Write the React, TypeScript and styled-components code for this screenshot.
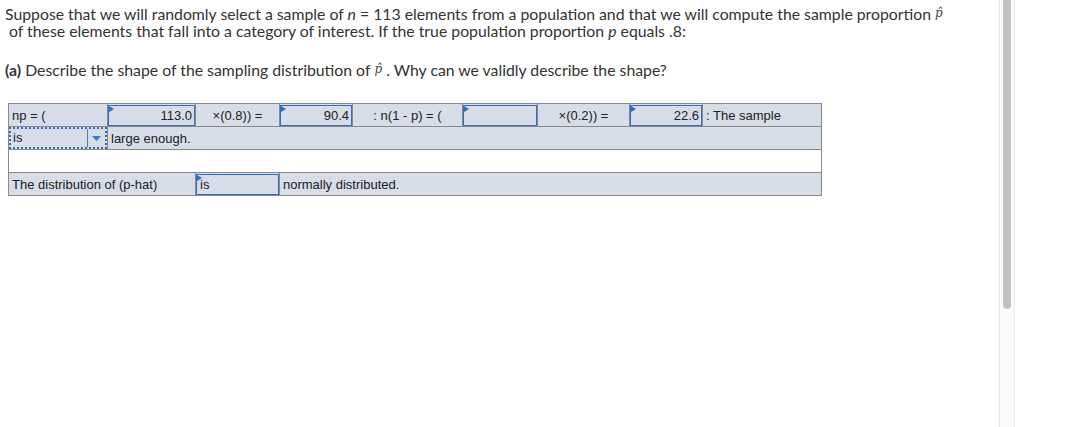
import React from "react";
import styled, { createGlobalStyle } from "styled-components";

const Global = createGlobalStyle`
  html, body { margin: 0; padding: 0; background: #ffffff; }
  body { overflow: hidden; }
`;

const Page = styled.div`
  display: flex;
  width: 1071px;
  height: 427px;
  overflow: hidden;
`;

const Main = styled.div`
  width: 999px;
  height: 427px;
  overflow: hidden;
  flex: none;
`;

const ScrollTrack = styled.div`
  height: 427px;
  flex: none;
  background: #fafafa;
  border-left: 1px solid #e6e6e6;
  border-right: 1px solid #ececec;
  padding: 0 3px;
  box-sizing: content-box;
  width: 8px;
  display: flex;
  flex-direction: column;
`;

const ScrollThumb = styled.div`
  height: 309px;
  background: #c1c1c1;
  border-radius: 0 0 4px 4px;
`;

const Content = styled.div`
  box-sizing: border-box;
  padding: 5px 0 0 5px;
  font-family: Lato, "Open Sans", sans-serif;
  font-size: 15.8px;
  color: #333333;
`;

const Para = styled.p`
  margin: 0;
  line-height: 17px;
`;

const Question = styled.p`
  margin: 22px 0 0 0;
  line-height: 17px;
`;

const Ital = styled.i`
  font-style: italic;
`;

const Hat = styled.span`
  display: inline-block;
  font-family: "DejaVu Serif", serif;
  font-style: italic;
  font-size: 12px;
  line-height: 12px;
  color: #444;
  vertical-align: 3px;
  margin: 0 4px;
`;

const Table = styled.table`
  margin: 25px 0 0 3px;
  border-collapse: collapse;
  table-layout: fixed;
  width: 813px;
  font-family: "Liberation Sans", Arial, sans-serif;
  font-size: 13px;
  color: #222;
`;

const Row = styled.tr<{ $blank?: boolean }>`
  height: 23px;
  background: ${(p) => (p.$blank ? "#ffffff" : "#d6dce8")};
`;

const Cell = styled.td<{ $align?: string }>`
  border: 1px solid #8a8a8a;
  padding: 0 3px;
  text-align: ${(p) => p.$align || "left"};
  white-space: nowrap;
  overflow: hidden;
  vertical-align: middle;
`;

const InputCell = styled.td`
  border: 1px solid #8a8a8a;
  padding: 0;
  vertical-align: middle;
`;

const InputBox = styled.div<{ $align?: string }>`
  position: relative;
  height: 21px;
  box-sizing: border-box;
  border: 1px solid #2f6fbd;
  line-height: 19px;
  padding: 0 2px 0 3px;
  text-align: ${(p) => p.$align || "right"};
  &::before {
    content: "";
    position: absolute;
    left: 0;
    top: 0;
    width: 0;
    height: 0;
    border-top: 3px solid transparent;
    border-bottom: 3px solid transparent;
    border-left: 5px solid #2f6fbd;
  }
`;

const SelectCell = styled.td`
  border: 1px solid #8a8a8a;
  padding: 0;
  vertical-align: middle;
`;

const Select = styled.div`
  display: flex;
  align-items: stretch;
  height: 22px;
  box-sizing: border-box;
  border: 2px dotted #2f6fbd;
`;

const SelectLabel = styled.div`
  flex: 1;
  line-height: 18px;
  padding-left: 2px;
  border-right: 1px solid #6a7a95;
`;

const SelectArrow = styled.div`
  width: 17px;
  display: flex;
  align-items: center;
  justify-content: center;
`;

const Arrow = () => (
  <svg width="9" height="5" viewBox="0 0 9 5">
    <path d="M0 0 H9 L4.5 5 Z" fill="#2f7fd0" />
  </svg>
);

export default function App() {
  return (
    <>
      <Global />
      <Page>
        <Main>
          <Content>
            <Para>
              Suppose that we will randomly select a sample of <Ital>n</Ital> = 113
              elements from a population and that we will compute the sample proportion
              <Hat>p̂</Hat>
            </Para>
            <Para>
              &nbsp;of these elements that fall into a category of interest. If the true
              population proportion <Ital>p</Ital> equals .8:
            </Para>
            <Question>
              <b>(a)</b> Describe the shape of the sampling distribution of
              <Hat>p̂</Hat>. Why can we validly describe the shape?
            </Question>
            <Table>
              <colgroup>
                <col style={{ width: 99 }} />
                <col style={{ width: 88 }} />
                <col style={{ width: 84 }} />
                <col style={{ width: 73 }} />
                <col style={{ width: 110 }} />
                <col style={{ width: 75 }} />
                <col style={{ width: 92 }} />
                <col style={{ width: 73 }} />
                <col style={{ width: 119 }} />
              </colgroup>
              <tbody>
                <Row>
                  <Cell>np = (</Cell>
                  <InputCell>
                    <InputBox>113.0</InputBox>
                  </InputCell>
                  <Cell $align="center">×(0.8)) =</Cell>
                  <InputCell>
                    <InputBox>90.4</InputBox>
                  </InputCell>
                  <Cell $align="center">: n(1 - p) = (</Cell>
                  <InputCell>
                    <InputBox></InputBox>
                  </InputCell>
                  <Cell $align="center">×(0.2)) =</Cell>
                  <InputCell>
                    <InputBox>22.6</InputBox>
                  </InputCell>
                  <Cell>: The sample</Cell>
                </Row>
                <Row>
                  <SelectCell>
                    <Select>
                      <SelectLabel>is</SelectLabel>
                      <SelectArrow>
                        <Arrow />
                      </SelectArrow>
                    </Select>
                  </SelectCell>
                  <Cell colSpan={8}>large enough.</Cell>
                </Row>
                <Row $blank>
                  <Cell colSpan={9}></Cell>
                </Row>
                <Row>
                  <Cell colSpan={2}>The distribution of (p-hat)</Cell>
                  <InputCell>
                    <InputBox $align="left">is</InputBox>
                  </InputCell>
                  <Cell colSpan={6}>normally distributed.</Cell>
                </Row>
              </tbody>
            </Table>
          </Content>
        </Main>
        <ScrollTrack>
          <ScrollThumb />
        </ScrollTrack>
      </Page>
    </>
  );
}
